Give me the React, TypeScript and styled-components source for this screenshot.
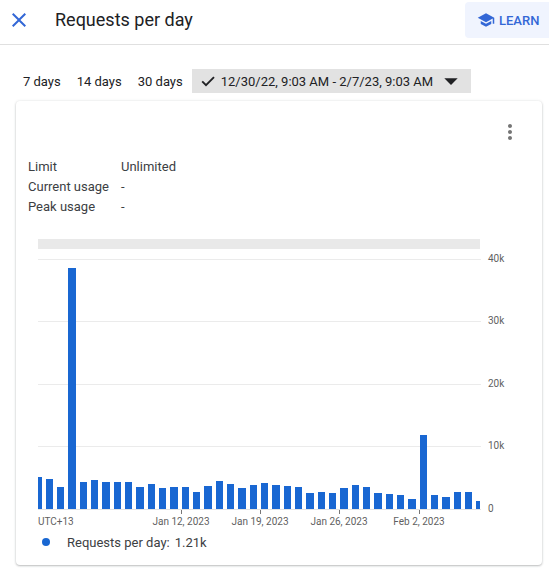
import * as React from 'react'
import styled, { createGlobalStyle } from 'styled-components'
import { MdArrowDropDown, MdClose, MdMoreVert, MdSchool } from 'react-icons/md'

const BLUE = '#1967d2'

// left x, right x, top y of each bar, read from the chart
const bars: Array<[number, number, number]> = [
    [38, 42, 477], [46, 53, 479], [57, 64, 487], [68, 76, 268], [80, 87, 482], [91, 98, 480],
    [102, 110, 482], [114, 121, 482], [125, 132, 482], [136, 144, 487], [148, 155, 484], [159, 166, 488],
    [170, 178, 487], [182, 189, 487], [193, 200, 492], [204, 212, 486], [216, 223, 481], [227, 234, 484],
    [238, 246, 488], [250, 257, 485], [261, 268, 483], [272, 280, 485], [284, 291, 486], [295, 302, 487],
    [306, 314, 493], [318, 325, 492], [329, 336, 493], [340, 348, 488], [352, 359, 485], [363, 370, 487],
    [374, 382, 493], [386, 393, 494], [397, 404, 495], [408, 416, 499], [420, 427, 435], [431, 438, 495],
    [442, 450, 497], [454, 461, 492], [465, 472, 492], [476, 480, 501],
]

const gridLines = [
    { y: 259, label: '40k' },
    { y: 321, label: '30k' },
    { y: 384, label: '20k' },
    { y: 446, label: '10k' },
]

const ticks = [
    { x: 181, label: 'Jan 12, 2023' },
    { x: 260, label: 'Jan 19, 2023' },
    { x: 339, label: 'Jan 26, 2023' },
    { x: 419, label: 'Feb 2, 2023' },
]

const usage = [
    { name: 'Limit', value: 'Unlimited' },
    { name: 'Current usage', value: '-' },
    { name: 'Peak usage', value: '-' },
]

export default function App() {
    return (
        <Page>
            <GlobalStyle />
            <Header>
                <CloseButton><MdClose size={24} /></CloseButton>
                <Title>Requests per day</Title>
                <LearnButton><MdSchool size={18} />LEARN</LearnButton>
            </Header>
            <RangeBar>
                <RangeOption>7 days</RangeOption>
                <RangeOption>14 days</RangeOption>
                <RangeOption>30 days</RangeOption>
                <CustomRange>
                    <svg width={18} height={18} viewBox="0 0 18 18">
                        <polyline points="2.2,9.4 6,13.2 14,5.2" fill="none" stroke="#202124" strokeWidth={1.9} />
                    </svg>
                    <span>12/30/22, 9:03 AM - 2/7/23, 9:03 AM</span>
                    <MdArrowDropDown size={32} />
                </CustomRange>
            </RangeBar>
            <Card>
                <CardTop>
                    <MoreButton><MdMoreVert size={24} /></MoreButton>
                </CardTop>
                <UsageTable>
                    {usage.map(row =>
                        <React.Fragment key={row.name}>
                            <span>{row.name}</span>
                            <span>{row.value}</span>
                        </React.Fragment>
                    )}
                </UsageTable>
                <Chart viewBox="16 232 526 298" width={526} height={298}>
                    <rect x={38} y={239} width={442} height={10} fill="#e9e9e9" />
                    {gridLines.map(line =>
                        <g key={line.label}>
                            <line x1={38} x2={481} y1={line.y + 0.5} y2={line.y + 0.5} stroke="#ebebeb" />
                            <AxisText x={488} y={line.y + 3}>{line.label}</AxisText>
                        </g>
                    )}
                    {bars.map(([left, right, top]) =>
                        <rect key={left} x={left} y={top} width={right - left} height={509 - top} fill={BLUE} />
                    )}
                    <line x1={38} x2={481} y1={509.5} y2={509.5} stroke="#e3e3e3" />
                    <AxisText x={488} y={512}>0</AxisText>
                    <AxisText x={38} y={525}>UTC+13</AxisText>
                    {ticks.map(tick =>
                        <g key={tick.label}>
                            <line x1={tick.x + 0.5} x2={tick.x + 0.5} y1={510} y2={514} stroke="#777" />
                            <AxisText x={tick.x} y={525} textAnchor="middle">{tick.label}</AxisText>
                        </g>
                    )}
                </Chart>
                <Legend>
                    <LegendDot />
                    <span>Requests per day:</span>
                    <span>1.21k</span>
                </Legend>
            </Card>
        </Page>
    )
}

const GlobalStyle = createGlobalStyle`
    body {
        margin: 0;
        background: #fff;
        font-family: Roboto, "Liberation Sans", sans-serif;
    }
`

const Page = styled.div`
    width: 549px;
    height: 573px;
    overflow: hidden;
    color: #202124;
`

const Header = styled.header`
    display: flex;
    align-items: center;
    height: 44px;
    box-sizing: content-box;
    border-bottom: 1px solid #e0e0e0;
`

const CloseButton = styled.div`
    display: flex;
    margin: -4px 0 0 7px;
    color: #3367d6;
`

const Title = styled.h1`
    flex: 1;
    margin: -5px 0 0 24px;
    font-size: 18px;
    font-weight: 400;
`

const LearnButton = styled.div`
    display: flex;
    align-items: center;
    gap: 4px;
    align-self: flex-start;
    box-sizing: border-box;
    width: 84px;
    height: 36px;
    margin-top: 2px;
    padding-left: 12px;
    border-radius: 4px 0 0 4px;
    background: #f0f4fe;
    color: #3367d6;
    font-size: 13px;
    font-weight: 500;
`

const RangeBar = styled.div`
    display: flex;
    align-items: center;
    height: 24px;
    margin-top: 24px;
    padding-left: 23px;
    font-size: 13px;
`

const RangeOption = styled.span`
    margin-right: 16px;
    font-weight: 400;
    &:nth-child(3) { margin-right: 9px; }
`

const CustomRange = styled.div`
    display: flex;
    align-items: center;
    box-sizing: border-box;
    width: 279px;
    height: 24px;
    padding-left: 8px;
    background: #e2e2e2;
    span { margin-left: 3px; flex: 1; white-space: nowrap; }
    svg:last-child { margin: -4px 4px -4px 0; }
`

const Card = styled.section`
    box-sizing: border-box;
    width: 526px;
    height: 464px;
    margin: 8px 0 0 16px;
    border-radius: 4px;
    background: #fff;
    box-shadow: 0 1px 2px rgba(60, 64, 67, 0.3), 0 0 3px rgba(60, 64, 67, 0.12);
`

const CardTop = styled.div`
    display: flex;
    justify-content: flex-end;
    height: 55px;
    padding: 19px 20px 0 0;
    box-sizing: border-box;
`

const MoreButton = styled.div`
    display: flex;
    height: 24px;
    color: #757575;
`

const UsageTable = styled.div`
    display: grid;
    grid-template-columns: 93px 1fr;
    grid-auto-rows: 20px;
    align-items: center;
    padding-left: 12px;
    color: #3c4043;
    font-size: 13px;
`

const Chart = styled.svg`
    display: block;
    margin-top: 16px;
`

const AxisText = styled.text`
    fill: #5f5f5f;
    font-family: Roboto, "Liberation Sans", sans-serif;
    font-size: 10px;
`

const Legend = styled.div`
    display: flex;
    align-items: center;
    height: 20px;
    margin-top: 2px;
    padding-left: 26px;
    color: #3c4043;
    font-size: 13px;
    span:last-child { margin-left: 5px; }
`

const LegendDot = styled.i`
    width: 8px;
    height: 8px;
    margin-right: 17px;
    border-radius: 50%;
    background: ${BLUE};
`
